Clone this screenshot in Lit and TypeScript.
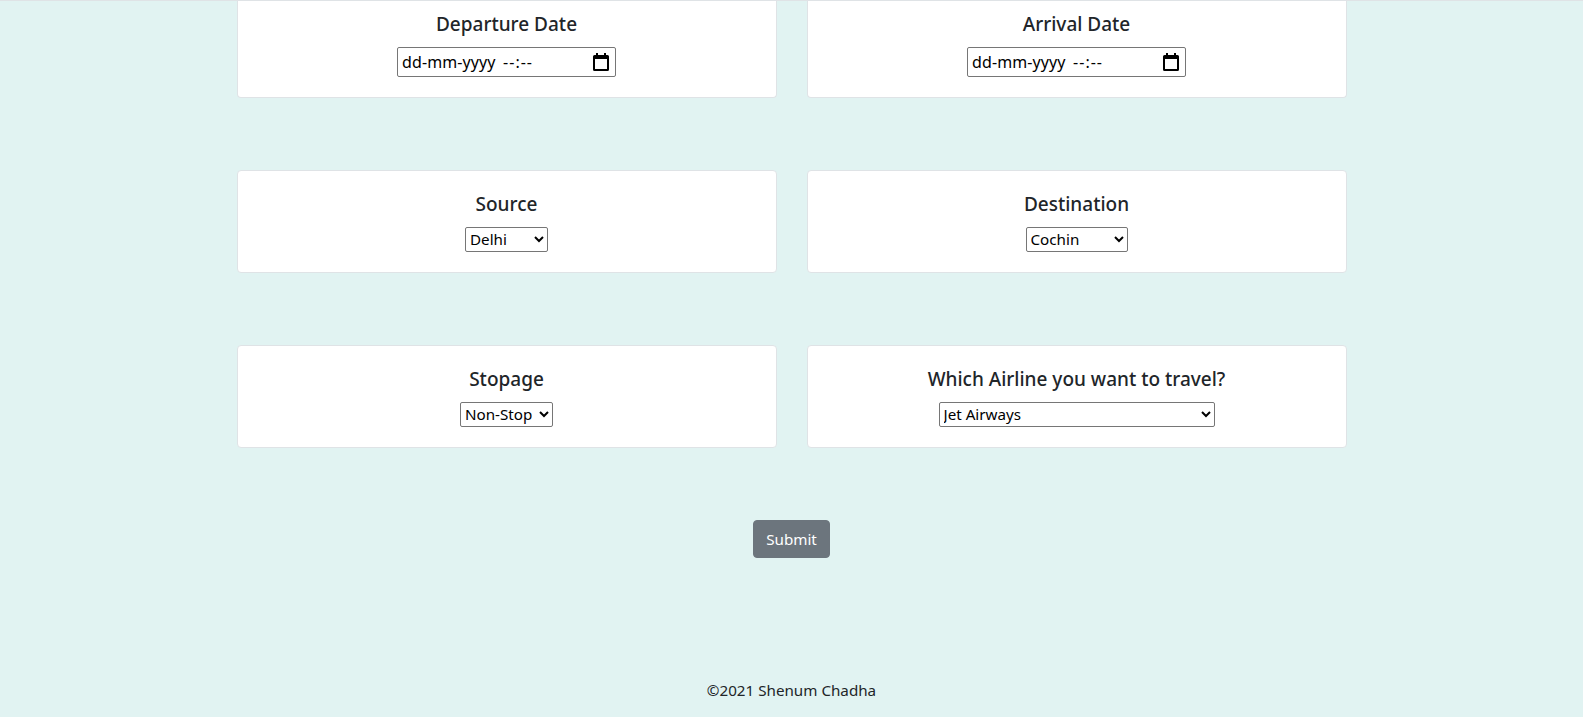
import { LitElement, html, css } from "lit";
import { customElement } from "lit/decorators.js";

@customElement("app-root")
export class AppRoot extends LitElement {
  static styles = css`
    :host {
      display: block;
      box-sizing: border-box;
      height: 717px;
      overflow: hidden;
      background: #e1f3f2;
      border-top: 1px solid #dfe3e6;
      font-family: "Noto Sans", "Open Sans", sans-serif;
      color: #212529;
    }
    * { box-sizing: border-box; }
    .container { width: 1110px; margin: 0 auto; display: flex; flex-direction: column; align-items: stretch; }
    .row { display: grid; grid-template-columns: 540px 540px; column-gap: 30px; }
    .row + .row { margin-top: 72px; }
    .card {
      background: #fff;
      border: 1px solid #dfe3e6;
      border-radius: 4px;
      display: flex;
      flex-direction: column;
      align-items: center;
      height: 103px;
      padding-top: 21px;
    }
    .card.top { height: 97px; border-top: none; border-top-left-radius: 0; border-top-right-radius: 0; padding-top: 11px; }
    .title { font-size: 19px; line-height: 24px; font-weight: 500; margin-bottom: 11px; white-space: nowrap; }
    .dt {
      width: 219px; height: 30px;
      border: 1px solid #767676; border-radius: 2px;
      display: flex; align-items: center; justify-content: space-between;
      padding: 0 4px;
      font-size: 16px; color: #000;
      letter-spacing: 0.1px;
      white-space: pre;
    }
    .time { letter-spacing: 1px; margin-left: -1px; }
    .dt svg { width: 20px; height: 20px; display: block; }
    select {
      height: 25px; font-family: inherit; font-size: 15.2px; color: #000;
      background: #fff; border: 1px solid #767676; border-radius: 2px;
      padding: 0 0 2px; margin: 0;
    }
    .w-source { width: 83px; }
    .w-dest { width: 102px; }
    .w-stop { width: 93px; }
    .w-air { width: 276px; }
    .actions { display: flex; justify-content: center; margin-top: 72px; }
    button {
      width: 77px; height: 38px; background: #6c757d; color: #fff; border: 1px solid #6c757d;
      border-radius: 4px; font-family: inherit; font-size: 15.2px; padding: 0;
    }
    footer { text-align: center; margin-top: 121px; font-size: 15.2px; line-height: 22px; }
  `;

  private dt() {
    return html`<div class="dt"><span>dd-mm-yyyy  <span class="time">--:--</span></span><svg viewBox="0 0 20 20"><path fill="#000" fill-rule="evenodd" d="M5 1h2v2h6V1h2v2h1.500A1.500 1.500 0 0 1 18 4.500v13a1.500 1.500 0 0 1-1.500 1.500h-13A1.500 1.500 0 0 1 2 17.500v-13A1.500 1.500 0 0 1 3.500 3H5V1Zm-1 6v10h12V7H4Z"/></svg></div>`;
  }

  private card(title: string, body: unknown, top = false) {
    return html`<div class="card ${top ? "top" : ""}"><div class="title">${title}</div>${body}</div>`;
  }

  render() {
    return html`<div class="container">
        <div class="row">
          ${this.card("Departure Date", this.dt(), true)}
          ${this.card("Arrival Date", this.dt(), true)}
        </div>
        <div class="row">
          ${this.card("Source", html`<select class="w-source"><option>Delhi</option><option>Kolkata</option><option>Mumbai</option><option>Chennai</option></select>`)}
          ${this.card("Destination", html`<select class="w-dest"><option>Cochin</option><option>Delhi</option><option>Hyderabad</option><option>Kolkata</option></select>`)}
        </div>
        <div class="row">
          ${this.card("Stopage", html`<select class="w-stop"><option>Non-Stop</option><option>1 Stop</option><option>2 Stops</option></select>`)}
          ${this.card("Which Airline you want to travel?", html`<select class="w-air"><option>Jet Airways</option><option>IndiGo</option><option>Air India</option><option>SpiceJet</option></select>`)}
        </div>
        <div class="actions"><button>Submit</button></div>
        <footer>©2021 Shenum Chadha</footer>
      </div>`;
  }
}
